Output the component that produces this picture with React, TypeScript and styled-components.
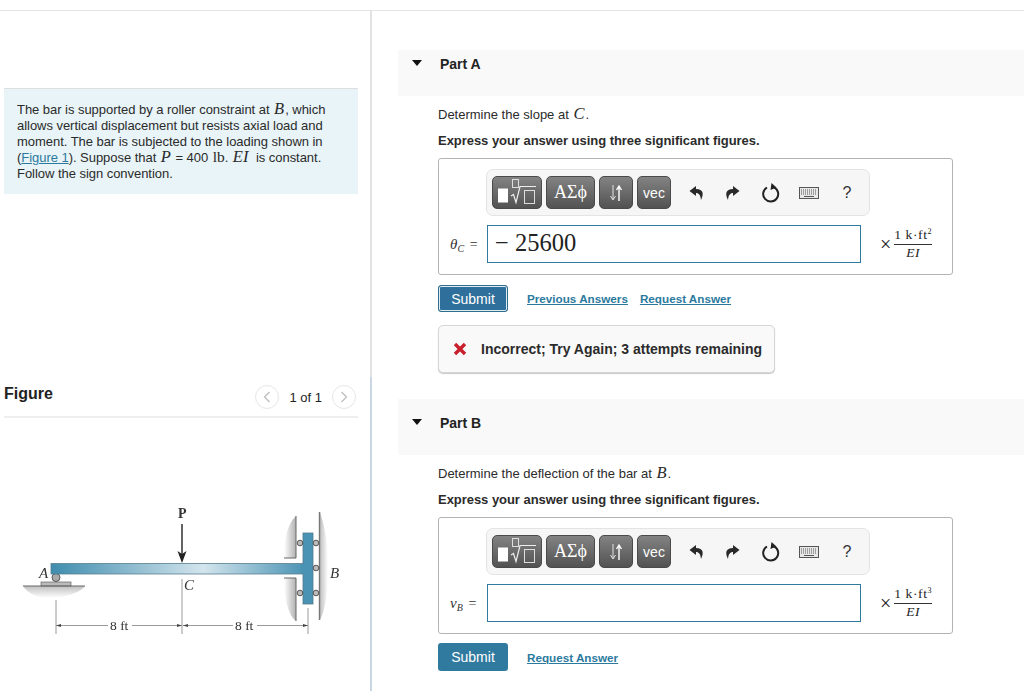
import React from 'react';
import styled, {createGlobalStyle} from 'styled-components';

const GlobalStyle = createGlobalStyle`
  html, body {
    margin: 0;
    padding: 0;
    background: #fff;
    overflow: hidden;
  }
  body {
    font-family: "Liberation Sans", Arial, sans-serif;
    font-size: 13px;
    color: #222;
  }
`;

const Page = styled.div`
  display: flex;
  width: 1024px;
  height: 691px;
  padding-top: 10px;
  box-sizing: border-box;
  overflow: hidden;
`;

const Columns = styled.div`
  display: flex;
  width: 100%;
  border-top: 1px solid #e4e4e4;
`;

const LeftColumn = styled.div`
  display: flex;
  flex-direction: column;
  width: 372px;
  flex: none;
`;

const IntroPane = styled.div`
  height: 366px;
  padding: 77px 0 0 4px;
  box-sizing: border-box;
  border-right: 2px solid #e2e2e2;
`;

const Intro = styled.div`
  width: 354px;
  height: 106px;
  box-sizing: border-box;
  padding: 13px 13px;
  background: #e8f4f7;
  border-top: 1px solid #dedede;
  line-height: 16px;
  font-size: 13px;
  letter-spacing: -0.04px;
  color: #2b2b2b;
`;

const M = styled.i`
  font-family: "Liberation Serif", serif;
  font-size: 16.5px;
  line-height: 0;
  padding: 0 1px;
`;

const MWide = styled(M)`
  padding-right: 4px;
`;

const MRoman = styled.span`
  font-family: "Liberation Serif", serif;
  font-size: 15.5px;
  line-height: 0;
  padding-left: 1px;
`;

const FigureLink = styled.a`
  color: #2b7a9e;
  text-decoration: underline;
`;

const FigurePane = styled.div`
  flex: 1;
  padding: 0 0 0 4px;
  border-right: 2px solid #c9d6e6;
`;

const FigureHeader = styled.div`
  display: flex;
  align-items: center;
  justify-content: space-between;
  width: 354px;
  height: 41px;
  box-sizing: border-box;
  padding-top: 1px;
  border-bottom: 2px solid #eeeeee;
`;

const FigureTitle = styled.div`
  font-size: 16px;
  font-weight: bold;
  color: #222;
  margin-top: -6px;
`;

const Pager = styled.div`
  display: flex;
  align-items: center;
  gap: 10px;
  margin-right: 2px;
  font-size: 13px;
`;

const PagerButton = styled.span`
  display: flex;
  align-items: center;
  justify-content: center;
  width: 24px;
  height: 24px;
  box-sizing: border-box;
  border: 1px solid #e6e6e6;
  border-radius: 50%;
`;

const FigureDrawing = styled.svg`
  display: block;
  margin: 72px 0 0 -4px;
  filter: blur(0.4px);
`;

const RightColumn = styled.div`
  flex: 1;
  padding: 39px 0 0 26px;
`;

const PartBar = styled.div<{$tall?: boolean}>`
  display: flex;
  align-items: flex-start;
  height: ${p => (p.$tall ? 56 : 46)}px;
  box-sizing: border-box;
  padding: ${p => (p.$tall ? 16 : 6)}px 0 0 14px;
  background: #f9f9f9;
  font-weight: bold;
  font-size: 14px;
  line-height: 16px;
  color: #222;
`;

const Caret = styled.span`
  width: 0;
  height: 0;
  margin: 4px 18px 0 0;
  border-left: 5.5px solid transparent;
  border-right: 5.5px solid transparent;
  border-top: 6px solid #111;
`;

const PartBody = styled.div`
  width: 515px;
  margin-left: 40px;
`;

const Prompt = styled.div`
  margin-top: 11px;
  line-height: 16px;
  color: #2b2b2b;
`;

const Instruction = styled.div`
  margin-top: 10px;
  line-height: 16px;
  font-weight: bold;
  letter-spacing: -0.04px;
  color: #2b2b2b;
`;

const AnswerBox = styled.div`
  margin-top: 9px;
  height: 117px;
  box-sizing: border-box;
  padding: 10px 0 0 48px;
  border: 1px solid #b3b3b3;
  border-radius: 3px;
  position: relative;
`;

const Toolbar = styled.div`
  display: flex;
  align-items: center;
  gap: 4px;
  width: 384px;
  height: 47px;
  margin-left: -1px;
  box-sizing: border-box;
  padding-left: 5px;
  background: #f6f6f6;
  border: 1px solid #e4e4e4;
  border-radius: 7px;
`;

const ToolButton = styled.span<{$w: number; $serif?: boolean}>`
  display: flex;
  align-items: center;
  justify-content: center;
  width: ${p => p.$w}px;
  height: 33px;
  box-sizing: border-box;
  background: linear-gradient(#838383, #525252);
  border: 1px solid #4a4a4a;
  border-radius: 5px;
  color: #fff;
  font-family: ${p => (p.$serif ? '"Liberation Serif", serif' : '"Liberation Sans", sans-serif')};
  font-size: ${p => (p.$serif ? 18 : 14)}px;
`;

const ToolIcon = styled.span<{$w: number}>`
  display: flex;
  align-items: center;
  justify-content: center;
  width: ${p => p.$w}px;
  height: 33px;
  font-size: 16px;
  color: #333;
`;

const ToolIcons = styled.div`
  display: flex;
  align-items: center;
  margin-left: 4px;
`;

const AnswerRow = styled.div`
  display: flex;
  align-items: center;
  margin-top: 9px;
`;

const VarLabel = styled.div`
  position: absolute;
  left: 11px;
  font-family: "Liberation Serif", serif;
  font-size: 15px;
  font-style: italic;
  color: #333;
  white-space: nowrap;
  span {
    font-style: normal;
    margin-left: 2px;
    font-size: 14px;
  }
  sub {
    font-size: 10px;
    vertical-align: -3px;
    line-height: 0;
  }
`;

const AnswerInput = styled.div`
  width: 374px;
  height: 38px;
  box-sizing: border-box;
  padding-left: 7px;
  border: 1px solid #2f7a9e;
  font-family: "Liberation Serif", serif;
  font-size: 24.5px;
  line-height: 33px;
  color: #222;
`;

const Units = styled.div`
  display: flex;
  align-items: center;
  margin-left: 19px;
  font-family: "Liberation Serif", serif;
  color: #222;
`;

const Times = styled.span`
  font-size: 20px;
  line-height: 20px;
  margin-right: 3px;
`;

const Fraction = styled.span`
  display: flex;
  flex-direction: column;
  align-items: center;
  font-size: 13.5px;
  line-height: 14px;
  font-weight: normal;
  letter-spacing: 0.6px;
  sup {
    font-size: 8px;
    line-height: 0;
  }
`;

const Numerator = styled.span`
  padding: 0 0 2px;
  border-bottom: 1px solid #333;
  white-space: nowrap;
`;

const Denominator = styled.i`
  padding-top: 1px;
`;

const Actions = styled.div`
  display: flex;
  align-items: center;
  margin-top: 9px;
  height: 28px;
`;

const SubmitButton = styled.button<{$focused?: boolean}>`
  width: 70px;
  height: ${p => (p.$focused ? 27 : 28)}px;
  padding: 0;
  box-sizing: border-box;
  align-self: flex-end;
  background: ${p => (p.$focused ? '#2f6f9c' : '#2f7a9e')};
  color: #fff;
  border: ${p => (p.$focused ? '1px solid #2f6d8c' : 'none')};
  border-radius: 3px;
  box-shadow: ${p => (p.$focused ? 'inset 0 0 0 1px #e0ecf4' : 'none')};
  font-family: "Liberation Sans", sans-serif;
  font-size: 14px;
`;

const ActionLink = styled.a<{$first?: boolean}>`
  margin-left: ${p => (p.$first ? 19 : 12)}px;
  color: #2b7a9e;
  font-size: 11.7px;
  font-weight: bold;
  text-decoration: underline;
`;

const Feedback = styled.div`
  display: flex;
  align-items: center;
  gap: 14px;
  width: 337px;
  height: 48px;
  margin-top: 13px;
  box-sizing: border-box;
  padding-left: 14px;
  background: #f9f9f9;
  border: 1px solid #d6d6d6;
  border-radius: 5px;
  box-shadow: 0 1px 1px #c8c8c8;
  font-size: 14px;
  font-weight: bold;
  color: #2b2b2b;
`;

const PartSpacer = styled.div`
  height: 26px;
`;

const BeamDrawing: React.FC = () => (
  <FigureDrawing width="370" height="160" viewBox="0 0 370 160">
    <defs>
      <linearGradient id="beam" x1="0" x2="1" y1="0" y2="0">
        <stop offset="0" stopColor="#3f8cae" />
        <stop offset="0.6" stopColor="#d3e5ed" />
        <stop offset="1" stopColor="#4a93b4" />
      </linearGradient>
      <linearGradient id="ground" x1="0" x2="0" y1="0" y2="1">
        <stop offset="0" stopColor="#c0c0c0" />
        <stop offset="1" stopColor="#ffffff" />
      </linearGradient>
      <linearGradient id="wallL" x1="0" x2="1" y1="0" y2="0">
        <stop offset="0" stopColor="#ffffff" />
        <stop offset="1" stopColor="#b0b0b0" />
      </linearGradient>
      <linearGradient id="wallR" x1="0" x2="1" y1="0" y2="0">
        <stop offset="0" stopColor="#c0c0c0" />
        <stop offset="1" stopColor="#ffffff" />
      </linearGradient>
    </defs>
    <path d="M23 96 H85 C80 104 60 108 50 108 C38 108 28 104 23 96Z" fill="url(#ground)" />
    <path d="M296 26 C287 34 284 50 284 68 H296Z M296 131 C287 124 284 105 284 88 H296Z" fill="url(#wallL)" />
    <path d="M320 22 C326 40 328 60 328 76 C328 100 326 118 320 130Z" fill="url(#wallR)" />
    <path d="M284 68 H296 V26 M284 88 H296 V131" fill="none" stroke="#666" strokeWidth="1" />
    <line x1="319.5" y1="22" x2="319.5" y2="130" stroke="#777" strokeWidth="1.4" />
    <rect x="41" y="92" width="30" height="4" fill="#bbb" stroke="#666" strokeWidth="0.7" />
    <line x1="23" y1="96" x2="85" y2="96" stroke="#666" strokeWidth="1" />
    <circle cx="56" cy="87.5" r="4" fill="#aaa" stroke="#555" strokeWidth="1" />
    <rect x="51" y="73.5" width="254" height="10.5" fill="url(#beam)" stroke="#5a7f90" strokeWidth="0.8" />
    <rect x="303" y="43" width="10" height="71" fill="#4a93b4" stroke="#55788a" strokeWidth="0.8" />
    <rect x="301" y="74" width="4" height="9.6" fill="#4a93b4" />
    {[[300, 53], [316, 53], [316, 78], [300, 103], [316, 103]].map(([cx, cy]) => (
      <circle key={`${cx}-${cy}`} cx={cx} cy={cy} r="2.8" fill="#bbb" stroke="#555" strokeWidth="1" />
    ))}
    <line x1="182" y1="34" x2="182" y2="66" stroke="#222" strokeWidth="1.4" />
    <path d="M177.5 61 L182 73 L186.5 61 L182 64Z" fill="#222" />
    <g stroke="#9a9a9a" strokeWidth="1" fill="none">
      <line x1="56" y1="110" x2="56" y2="144" />
      <line x1="182" y1="89" x2="182" y2="144" />
      <line x1="308" y1="118" x2="308" y2="144" />
      <line x1="56" y1="135.5" x2="108" y2="135.5" />
      <line x1="132" y1="135.5" x2="182" y2="135.5" />
      <line x1="183" y1="135.5" x2="233" y2="135.5" />
      <line x1="257" y1="135.5" x2="308" y2="135.5" />
    </g>
    <path d="M56 135.5 L61 134 V137Z M182 135.5 L177 134 V137Z M183 135.5 L188 134 V137Z M308 135.5 L303 134 V137Z" fill="#444" />
    <g fontFamily="'Liberation Serif', serif" fill="#333">
      <text x="178" y="28" fontSize="14" fontWeight="bold">P</text>
      <text x="39" y="88" fontSize="15" fontStyle="italic">A</text>
      <text x="184" y="100" fontSize="15" fontStyle="italic">C</text>
      <text x="330" y="88" fontSize="15" fontStyle="italic">B</text>
      <text x="110" y="140" fontSize="13.5">8 ft</text>
      <text x="235" y="140" fontSize="13.5">8 ft</text>
    </g>
  </FigureDrawing>
);

const MathIcon: React.FC = () => (
  <svg width="40" height="28" viewBox="0 0 40 28">
    <rect x="1" y="9.500" width="10" height="14" fill="#fff" />
    <rect x="15.500" y="0.500" width="6" height="8" fill="none" stroke="#ddd" />
    <path d="M14 17 L16.500 15.500 L19 23.500 L23 7.500 H39" fill="none" stroke="#eee" strokeWidth="1.200" />
    <rect x="27.500" y="11.500" width="10" height="13" fill="none" stroke="#ddd" />
  </svg>
);

const ArrowsIcon: React.FC = () => (
  <svg width="16" height="20" viewBox="0 0 16 20">
    <path d="M5 2 V16 M2.500 13 L5 17 L7.500 13" fill="none" stroke="#e4e4e4" strokeWidth="1" />
    <path d="M11 18 V4 M8.500 7 L11 3 L13.500 7" fill="none" stroke="#fff" strokeWidth="1.400" />
  </svg>
);

const UndoIcon: React.FC = () => (
  <svg width="15" height="16" viewBox="0 0 15 16">
    <path d="M7 1 L0.500 6 L7 11 V8 C10 8 11.500 10 12 15 C15 9 14.500 4 7 4Z" fill="#2a2a2a" />
  </svg>
);

const RedoIcon: React.FC = () => (
  <svg width="15" height="16" viewBox="0 0 15 16">
    <path d="M8 1 L14.500 6 L8 11 V8 C5 8 3.500 10 3 15 C0 9 0.500 4 8 4Z" fill="#2a2a2a" />
  </svg>
);

const ResetIcon: React.FC = () => (
  <svg width="20" height="22" viewBox="0 0 20 22">
    <path d="M6 5.500 A7.500 7.500 0 1 0 13 5.300" fill="none" stroke="#222" strokeWidth="2" />
    <path d="M10.500 1 L15.500 5.500 L9.500 8Z" fill="#222" />
  </svg>
);

const KeyboardIcon: React.FC = () => (
  <svg width="20" height="12" viewBox="0 0 20 12">
    <rect x="0.500" y="0.500" width="19" height="11" fill="#e8e8e8" stroke="#555" />
    <path d="M2 3 H18 M2 5 H18 M2 7 H18" stroke="#555" strokeWidth="1" strokeDasharray="1 1" />
    <path d="M5 9.500 H15" stroke="#555" strokeWidth="1" />
  </svg>
);

const EquationToolbar: React.FC = () => (
  <Toolbar>
    <ToolButton $w={50}><MathIcon /></ToolButton>
    <ToolButton $w={49} $serif>ΑΣϕ</ToolButton>
    <ToolButton $w={34}><ArrowsIcon /></ToolButton>
    <ToolButton $w={34}>vec</ToolButton>
    <ToolIcons>
      <ToolIcon $w={35}><UndoIcon /></ToolIcon>
      <ToolIcon $w={36}><RedoIcon /></ToolIcon>
      <ToolIcon $w={42}><ResetIcon /></ToolIcon>
      <ToolIcon $w={34}><KeyboardIcon /></ToolIcon>
      <ToolIcon $w={42}>?</ToolIcon>
    </ToolIcons>
  </Toolbar>
);

const App: React.FC = () => (
  <>
    <GlobalStyle />
    <Page>
      <Columns>
        <LeftColumn>
          <IntroPane>
            <Intro>
              The bar is supported by a roller constraint at <M>B</M>, which allows vertical displacement but resists axial load and moment. The bar is subjected to the loading shown in (<FigureLink>Figure 1</FigureLink>). Suppose that <M>P</M> = 400 <MRoman>lb</MRoman>. <MWide>EI</MWide> is constant. Follow the sign convention.
            </Intro>
          </IntroPane>
          <FigurePane>
            <FigureHeader>
              <FigureTitle>Figure</FigureTitle>
              <Pager>
                <PagerButton>
                  <svg width="8" height="12" viewBox="0 0 8 12"><path d="M6.500 1 L1.500 6 L6.500 11" fill="none" stroke="#bbb" strokeWidth="1.200" /></svg>
                </PagerButton>
                <span>1 of 1</span>
                <PagerButton>
                  <svg width="8" height="12" viewBox="0 0 8 12"><path d="M1.500 1 L6.500 6 L1.500 11" fill="none" stroke="#bbb" strokeWidth="1.200" /></svg>
                </PagerButton>
              </Pager>
            </FigureHeader>
            <BeamDrawing />
          </FigurePane>
        </LeftColumn>
        <RightColumn>
          <PartBar><Caret />Part A</PartBar>
          <PartBody>
            <Prompt>Determine the slope at <M>C</M>.</Prompt>
            <Instruction>Express your answer using three significant figures.</Instruction>
            <AnswerBox>
              <EquationToolbar />
              <AnswerRow>
                <VarLabel>θ<sub>C</sub> <span>=</span></VarLabel>
                <AnswerInput>− 25600</AnswerInput>
                <Units>
                  <Times>×</Times>
                  <Fraction>
                    <Numerator>1 k·ft<sup>2</sup></Numerator>
                    <Denominator>EI</Denominator>
                  </Fraction>
                </Units>
              </AnswerRow>
            </AnswerBox>
            <Actions>
              <SubmitButton $focused>Submit</SubmitButton>
              <ActionLink $first>Previous Answers</ActionLink>
              <ActionLink>Request Answer</ActionLink>
            </Actions>
            <Feedback>
              <svg width="14" height="14" viewBox="0 0 14 14"><path d="M2 2 L12 12 M12 2 L2 12" stroke="#c8202c" strokeWidth="3.400" /></svg>
              Incorrect; Try Again; 3 attempts remaining
            </Feedback>
            <PartSpacer />
          </PartBody>
          <PartBar $tall><Caret />Part B</PartBar>
          <PartBody>
            <Prompt>Determine the deflection of the bar at <M>B</M>.</Prompt>
            <Instruction>Express your answer using three significant figures.</Instruction>
            <AnswerBox>
              <EquationToolbar />
              <AnswerRow>
                <VarLabel>v<sub>B</sub> <span>=</span></VarLabel>
                <AnswerInput />
                <Units>
                  <Times>×</Times>
                  <Fraction>
                    <Numerator>1 k·ft<sup>3</sup></Numerator>
                    <Denominator>EI</Denominator>
                  </Fraction>
                </Units>
              </AnswerRow>
            </AnswerBox>
            <Actions>
              <SubmitButton>Submit</SubmitButton>
              <ActionLink $first>Request Answer</ActionLink>
            </Actions>
          </PartBody>
        </RightColumn>
      </Columns>
    </Page>
  </>
);

export default App;
